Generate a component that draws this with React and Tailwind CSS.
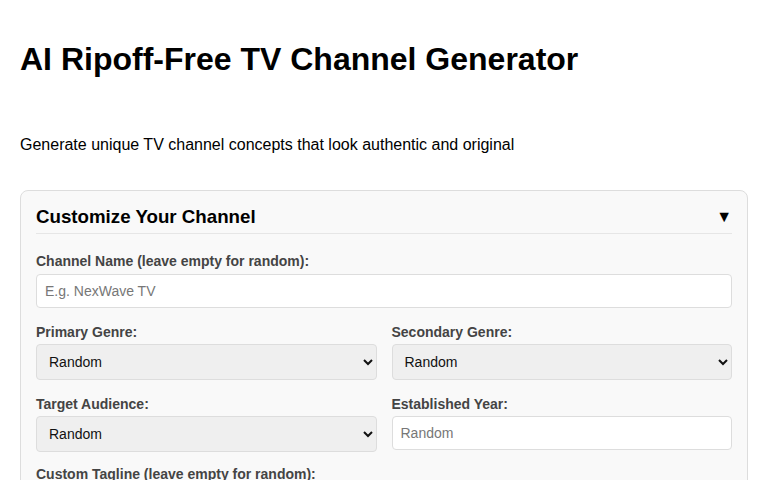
import { useState } from 'react'

const genres = ['Random', 'News', 'Sports', 'Drama', 'Comedy', 'Documentary', 'Kids', 'Music']
const audiences = ['Random', 'Kids', 'Teens', 'Adults', 'Seniors', 'Families']

function Field({ label, tight, children }) {
  return (
    <div className="flex flex-col">
      <label className={(tight ? 'mb-[4px]' : 'mb-[5px]') + ' text-[14px] font-bold leading-4 text-[#444]'}>{label}</label>
      {children}
    </div>
  )
}

function Select({ value, onChange, options }) {
  return (
    <select
      value={value}
      onChange={(e) => onChange(e.target.value)}
      className="h-[36px] w-full rounded-[4px] border border-[#ddd] bg-[#efefef] px-[8px] text-[14px] text-[#111]"
    >
      {options.map((o) => (
        <option key={o}>{o}</option>
      ))}
    </select>
  )
}

export default function App() {
  const [open, setOpen] = useState(true)
  const [primary, setPrimary] = useState('Random')
  const [secondary, setSecondary] = useState('Random')
  const [audience, setAudience] = useState('Random')

  return (
    <div className="min-h-screen bg-white p-[20px] font-['Liberation_Sans',Arial,sans-serif] text-black">
      <h1 className="mt-[21px] text-[32px] font-bold leading-[37px]">AI Ripoff-Free TV Channel Generator</h1>
      <p className="mt-[58px] text-[16px] leading-[18px]">
        Generate unique TV channel concepts that look authentic and original
      </p>

      <div className="mt-[36px] rounded-[8px] border border-[#ddd] bg-[#f9f9f9] px-[15px] pt-[15px] pb-[20px]">
        <div
          className="flex cursor-pointer items-center justify-between border-b border-[#e6e6e6] pb-[5px]"
          onClick={() => setOpen(!open)}
        >
          <h3 className="text-[18.72px] font-bold leading-[22px]">Customize Your Channel</h3>
          <span className="text-[16px] leading-[22px]">{open ? '▼' : '▶'}</span>
        </div>

        {open && (
          <div className="mt-[19px] flex flex-col gap-[16px]">
            <Field label="Channel Name (leave empty for random):">
              <input
                placeholder="E.g. NexWave TV"
                className="h-[34px] w-full rounded-[4px] border border-[#ddd] bg-white px-[8px] text-[14px] placeholder:text-[#777]"
              />
            </Field>
            <div className="-mb-[2px] grid grid-cols-2 gap-x-[15px] gap-y-[16px]">
              <Field tight label="Primary Genre:">
                <Select value={primary} onChange={setPrimary} options={genres} />
              </Field>
              <Field tight label="Secondary Genre:">
                <Select value={secondary} onChange={setSecondary} options={genres} />
              </Field>
              <Field tight label="Target Audience:">
                <Select value={audience} onChange={setAudience} options={audiences} />
              </Field>
              <Field tight label="Established Year:">
                <input
                  placeholder="Random"
                  className="h-[34px] w-full rounded-[4px] border border-[#ddd] bg-white px-[8px] text-[14px] placeholder:text-[#777]"
                />
              </Field>
            </div>
            <Field label="Custom Tagline (leave empty for random):">
              <input
                placeholder="E.g. Where stories come alive"
                className="h-[34px] w-full rounded-[4px] border border-[#ddd] bg-white px-[8px] text-[14px] placeholder:text-[#777]"
              />
            </Field>
          </div>
        )}
      </div>
    </div>
  )
}
